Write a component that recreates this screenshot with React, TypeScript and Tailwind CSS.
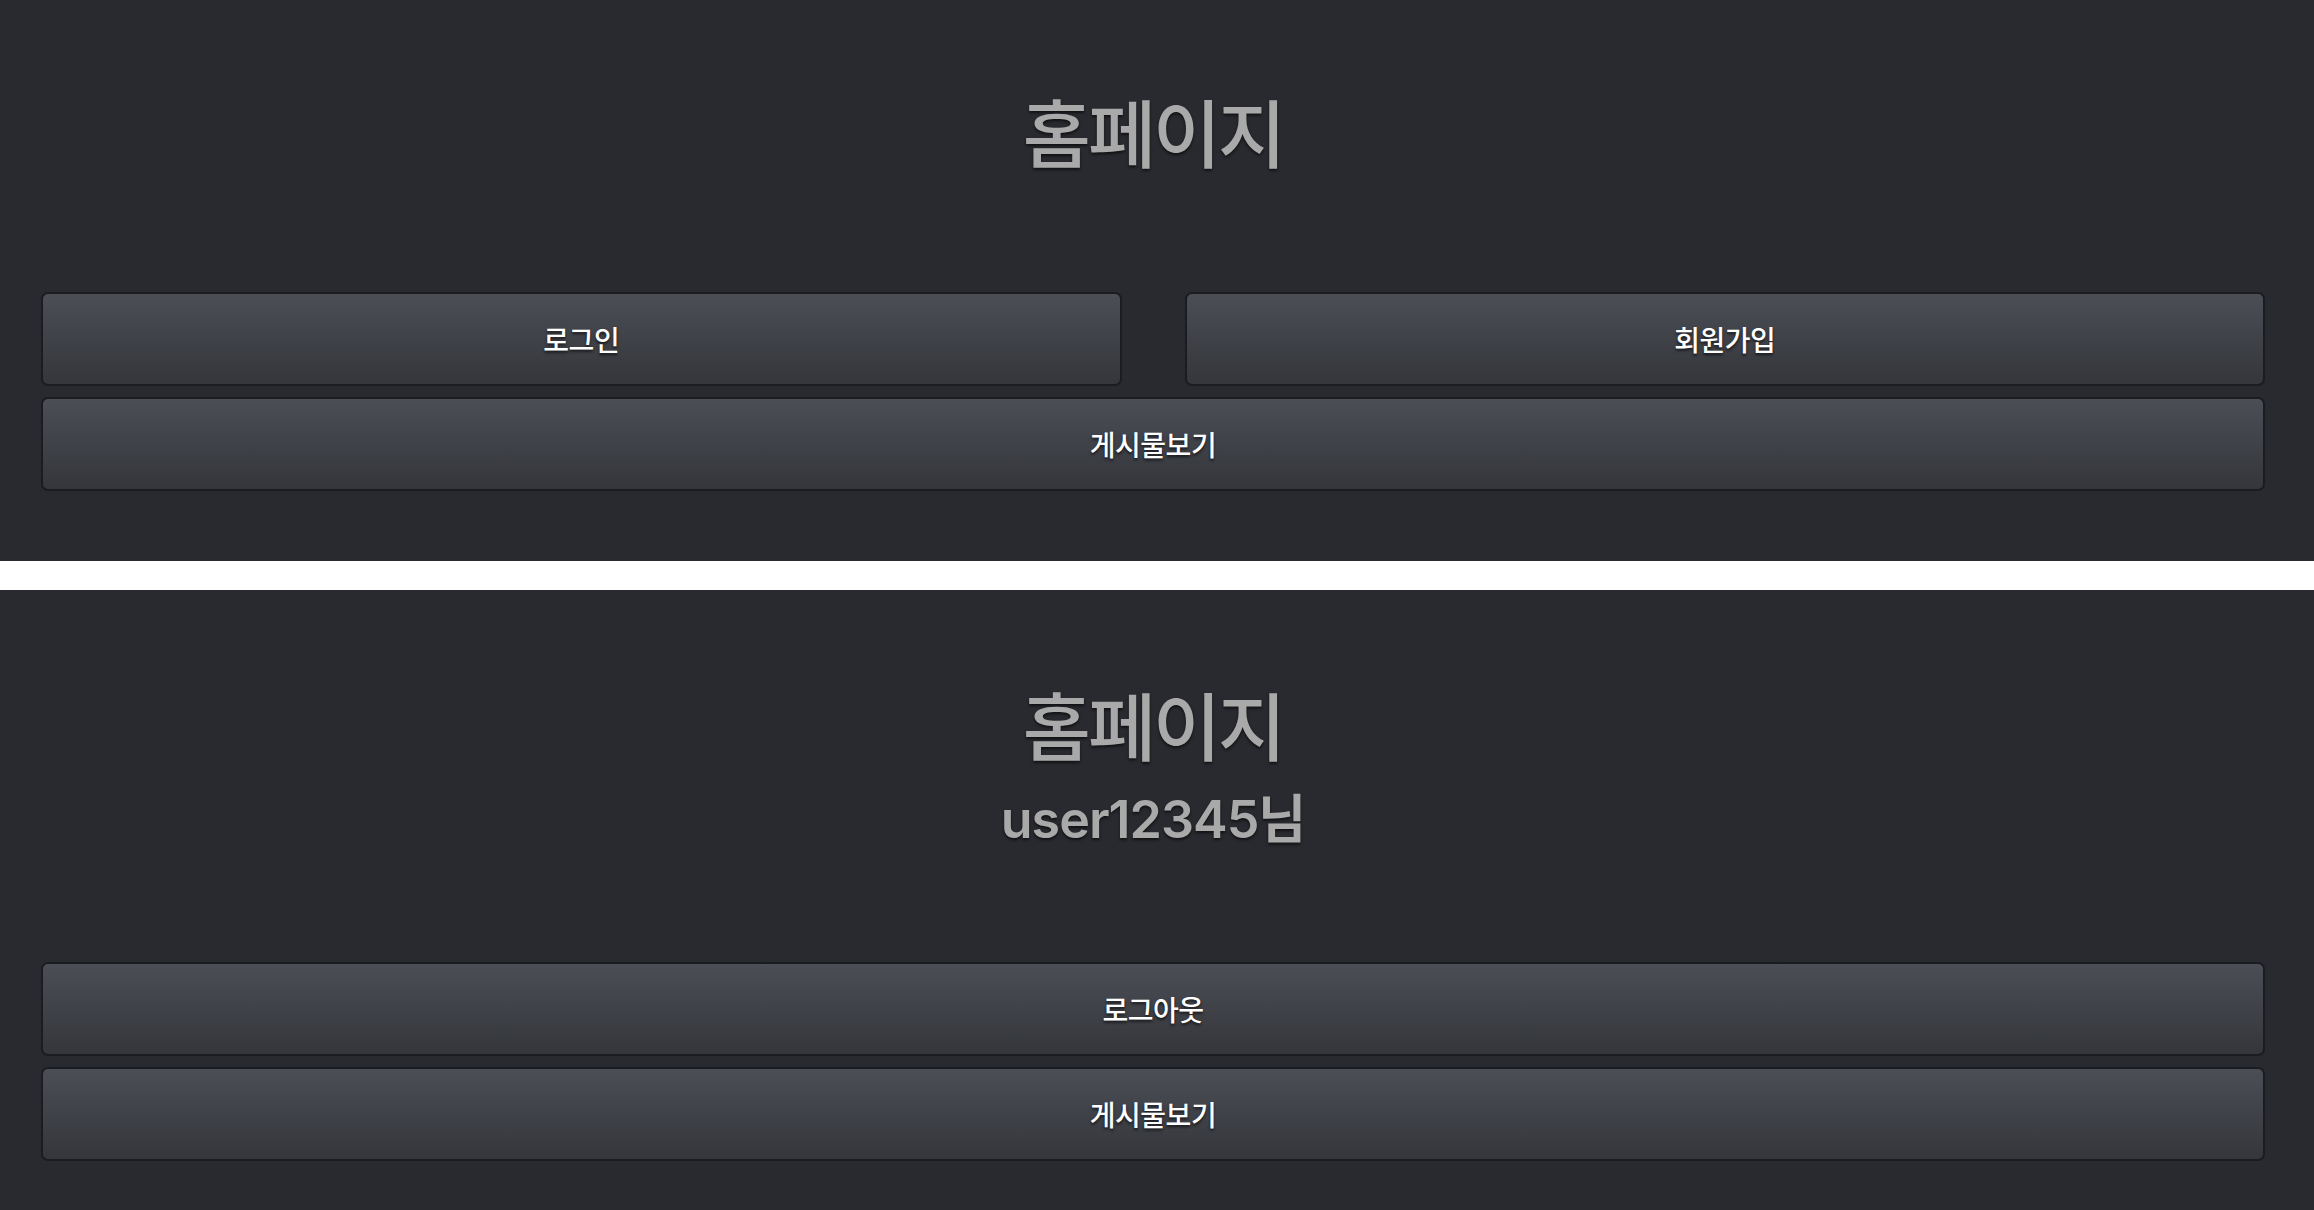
const font = "font-['Noto_Sans_CJK_KR','Noto_Sans',sans-serif]";

function Btn({ label }: { label: string }) {
  return (
    <button className="flex h-[94px] w-full items-center justify-center rounded-[7px] border-2 border-[#1b1c20] bg-gradient-to-b from-[#4b4e55] to-[#34363b] text-[28px] font-medium tracking-[-0.5px] text-white [text-shadow:0_2px_3px_rgba(0,0,0,0.65)]">
      {label}
    </button>
  );
}

function Title() {
  return (
    <h1 className="h-[72px] text-center text-[74px] leading-[72px] font-medium tracking-[-3px] text-[#a9a9a9] [text-shadow:0_2px_3px_rgba(0,0,0,0.6)]">
      홈페이지
    </h1>
  );
}

export default function App() {
  return (
    <div className={`min-h-[1210px] bg-white ${font}`}>
      {/* logged out */}
      <section className="flex h-[561px] flex-col bg-[#282a2f] pt-[94px] pr-[49px] pl-[41px]">
        <Title />
        <div className="mt-[126px] flex flex-col gap-[11px]">
          <div className="grid grid-cols-2 gap-[63px]">
            <Btn label="로그인" />
            <Btn label="회원가입" />
          </div>
          <Btn label="게시물보기" />
        </div>
      </section>

      <div className="h-[29px] bg-white" />

      {/* logged in */}
      <section className="flex h-[620px] flex-col bg-[#282a2f] pt-[97px] pr-[49px] pl-[41px]">
        <Title />
        <p className="mt-[33px] h-[56px] text-center font-['Inter','Noto_Sans_CJK_KR',sans-serif] text-[52px] leading-[56px] font-semibold tracking-[-1px] text-[#a9a9a9] [text-shadow:0_2px_3px_rgba(0,0,0,0.6)]">
          user12345님
        </p>
        <div className="mt-[114px] flex flex-col gap-[11px]">
          <Btn label="로그아웃" />
          <Btn label="게시물보기" />
        </div>
      </section>
    </div>
  );
}
